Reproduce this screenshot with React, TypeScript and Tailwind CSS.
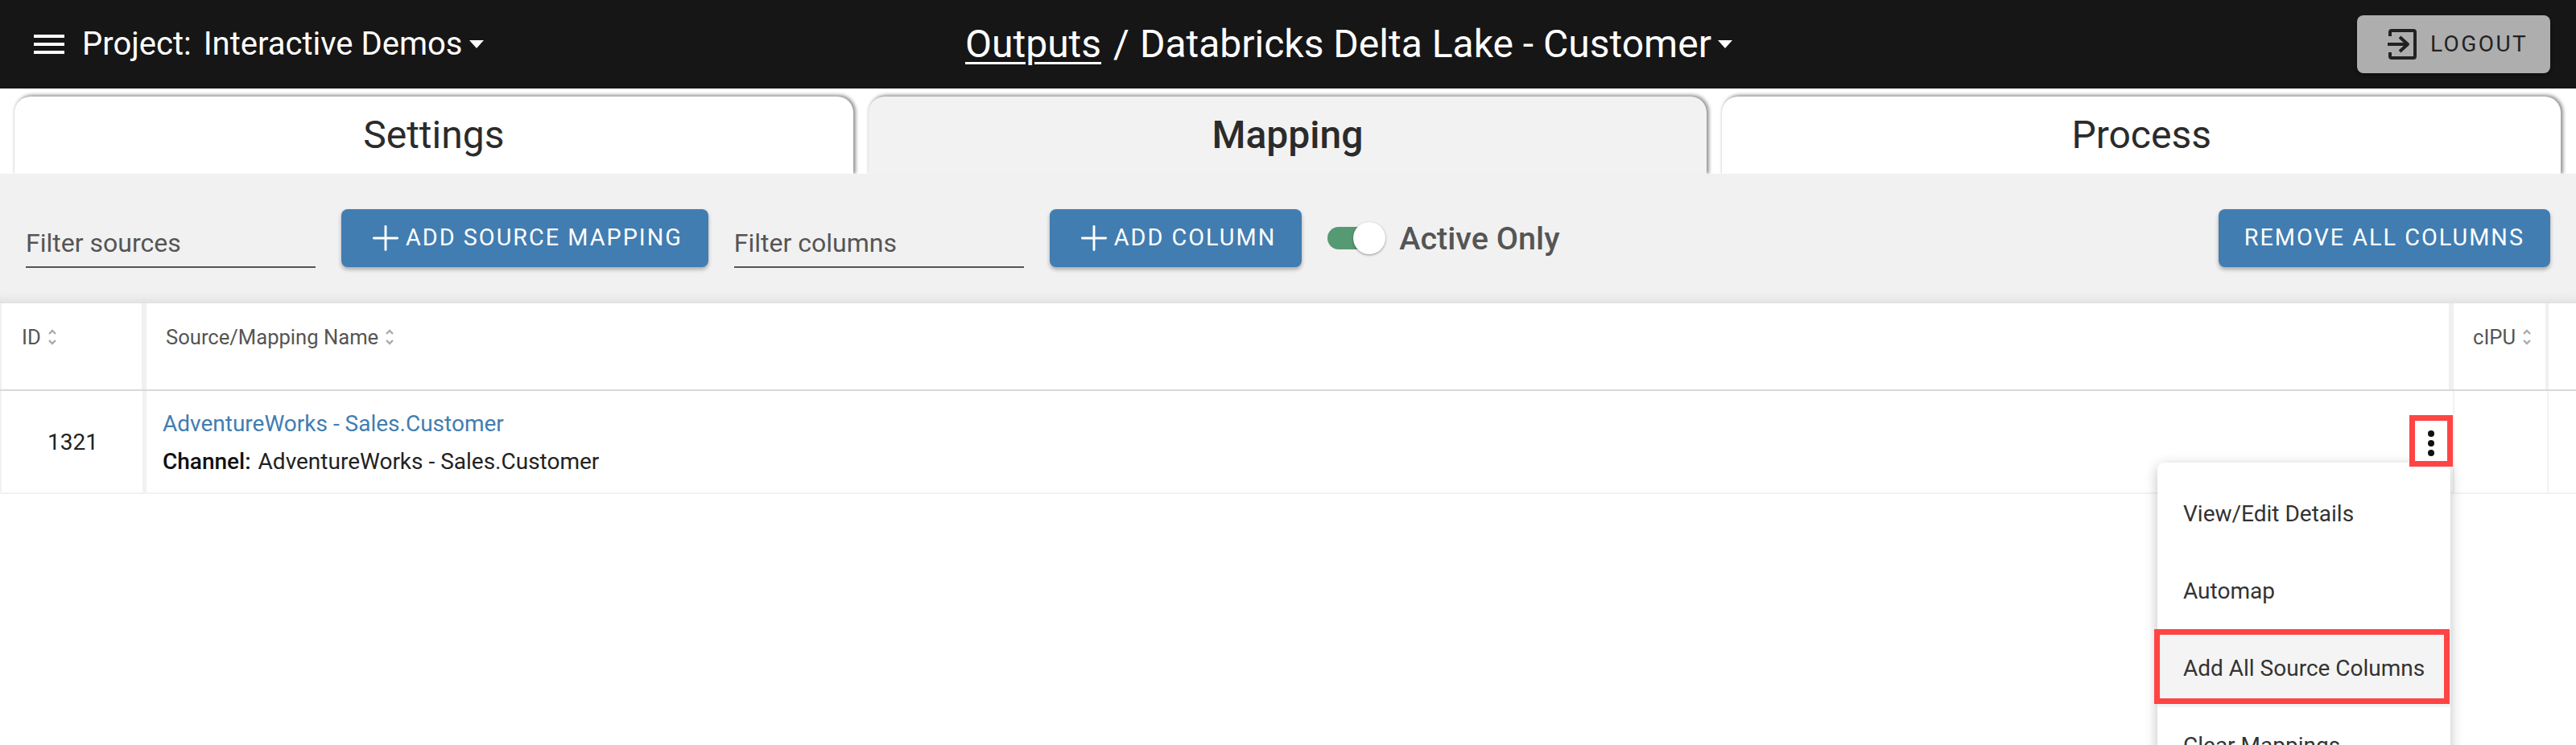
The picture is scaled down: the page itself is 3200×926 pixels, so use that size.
import { Plus } from 'lucide-react';

function SortIcon() {
  return (
    <svg viewBox="0 0 10 20" className="ml-[9px] mt-[9px] h-[20px] w-[10px] text-[#aaaaaa]" fill="none" stroke="currentColor" strokeWidth="2.4">
      <path d="M1 6l4-4 4 4" />
      <path d="M1 14l4 4 4-4" />
    </svg>
  );
}

function Caret() {
  return <span className="ml-[8px] h-0 w-0 border-x-[9px] border-t-[10px] border-x-transparent border-t-white" />;
}

function LogoutIcon() {
  return (
    <svg viewBox="0 0 36 38" className="h-[38px] w-[36px]" fill="none" stroke="currentColor" strokeWidth="4" strokeLinejoin="round">
      <path d="M3 9V4a2 2 0 0 1 2-2h27a2 2 0 0 1 2 2v30a2 2 0 0 1-2 2H5a2 2 0 0 1-2-2v-5" />
      <path d="M0 19h25" />
      <path d="M15 10l10 9-10 9" />
    </svg>
  );
}

function ActionButton({ label, icon }: { label: string; icon?: boolean }) {
  return (
    <button className="flex h-[72px] items-center justify-center rounded-[8px] bg-[#417db1] px-[32px] text-[28.8px] font-[450] tracking-[2px] text-white shadow-[0_3px_5px_rgba(0,0,0,0.3)]">
      {icon && <Plus className="-ml-[2px] h-[50px] w-[50px]" strokeWidth={1.4} />}
      {label}
    </button>
  );
}

function FilterInput({ placeholder }: { placeholder: string }) {
  return (
    <div className="flex h-[73px] w-[360px] items-center border-b-[2px] border-[#555] pt-[12px] text-[32px] text-[#555]">
      {placeholder}
    </div>
  );
}

function Tab({ label, active }: { label: string; active?: boolean }) {
  return (
    <div
      className={`flex h-[96px] flex-1 items-center justify-center rounded-t-[20px] text-[48px] text-[#2b2b2b] shadow-[2px_-1px_4px_1px_rgba(0,0,0,0.42)] ${
        active ? 'bg-[#f2f2f2] font-medium' : 'bg-white font-[375]'
      }`}
    >
      {label}
    </div>
  );
}

const menuItems = ['View/Edit Details', 'Automap', 'Add All Source Columns', 'Clear Mappings'];

export default function App() {
  return (
    <div className="h-[926px] w-[3200px] overflow-hidden bg-white font-['Roboto',sans-serif]">
      <header className="flex h-[110px] items-center bg-[#161616] pl-[42px] pr-[32px] text-white">
        <div className="flex w-[1076px] items-center text-[40px]">
          <svg viewBox="0 0 38 24" className="mr-[22px] h-[24px] w-[38px]" fill="currentColor">
            <rect width="38" height="4" />
            <rect y="10" width="38" height="4" />
            <rect y="20" width="38" height="4" />
          </svg>
          <span>Project:</span>
          <span className="ml-[15px]">Interactive Demos</span>
          <Caret />
        </div>
        <div className="flex flex-1 items-center text-[48px]">
          <span className="ml-[81px] underline decoration-[3px] underline-offset-[6px]">Outputs</span>
          <span className="ml-[15px] mr-[13px]">/</span>
          <span>Databricks Delta Lake - Customer</span>
          <Caret />
        </div>
        <button className="flex h-[72px] w-[240px] items-center rounded-[8px] bg-[#aeaeae] pl-[38px] text-[28px] tracking-[2.4px] text-[#222] shadow-[0_2px_4px_rgba(0,0,0,0.4)]">
          <LogoutIcon />
          <span className="ml-[17px]">LOGOUT</span>
        </button>
      </header>

      <nav className="flex gap-[19px] bg-white pl-[18px] pr-[19px] pt-[10px]">
        <Tab label="Settings" />
        <Tab label="Mapping" active />
        <Tab label="Process" />
      </nav>

      <section className="relative flex h-[161px] items-start gap-[32px] bg-[#f1f1f1] px-[32px] pt-[44px] shadow-[inset_0_-14px_14px_-12px_rgba(0,0,0,0.1)]">
        <FilterInput placeholder="Filter sources" />
        <ActionButton label="ADD SOURCE MAPPING" icon />
        <FilterInput placeholder="Filter columns" />
        <ActionButton label="ADD COLUMN" icon />
        <div className="flex h-[72px] items-center">
          <div className="relative h-[28px] w-[60px] rounded-full bg-[#559a72]">
            <span className="absolute -top-[6px] left-[32px] h-[40px] w-[40px] rounded-full bg-white shadow-[0_1px_3px_rgba(0,0,0,0.4)]" />
          </div>
          <span className="ml-[29px] pt-[2px] text-[39.6px] font-medium text-[#555]">Active Only</span>
        </div>
        <div className="ml-auto">
          <ActionButton label="REMOVE ALL COLUMNS" />
        </div>
      </section>

      <div className="relative">
        <div className="flex h-[109px] border-b-[2px] border-[#d8d8d8] text-[25.6px] text-[#555]">
          <div className="flex w-[182px] items-start border-l-[2px] border-r-[6px] border-[#f0f0f0] pl-[25px] pt-[23px]">
            ID
            <SortIcon />
          </div>
          <div className="flex flex-1 items-start pl-[24px] pt-[23px]">
            Source/Mapping Name
            <SortIcon />
          </div>
          <div className="flex w-[124px] items-start border-l-[6px] border-r-[4px] border-[#f0f0f0] pl-[24px] pt-[23px]">
            cIPU
            <SortIcon />
          </div>
          <div className="w-[34px]" />
        </div>
        <div className="flex h-[128px] border-b-[2px] border-[#f2f2f2] text-[28px] text-[#222]">
          <div className="flex w-[182px] items-center justify-center border-l-[2px] border-r-[5px] border-[#f2f2f2] pl-[2px] pt-[2px]">1321</div>
          <div className="flex flex-1 items-center justify-between pl-[20px]">
            <div className="flex flex-col gap-[15px] pt-[2px] leading-[32px]">
              <span className="text-[#417db1]">AdventureWorks - Sales.Customer</span>
              <span>
                <b className="mr-[2px] font-medium text-[#111]">Channel:</b> AdventureWorks - Sales.Customer
              </span>
            </div>
            <button className="relative z-10 mb-[2px] flex h-[64px] w-[54px] flex-col items-center justify-center gap-[4px] border-[7px] border-[#ff4444] bg-white pt-[6px]">
              <span className="h-[8px] w-[8px] rounded-full bg-[#111]" />
              <span className="h-[8px] w-[8px] rounded-full bg-[#111]" />
              <span className="h-[8px] w-[8px] rounded-full bg-[#111]" />
            </button>
          </div>
          <div className="w-[119px] border-x-[2px] border-[#f2f2f2]" />
          <div className="w-[34px]" />
        </div>

        {/* open row menu */}
        <div className="absolute left-[2680px] top-[198px] w-[364px] rounded-[8px] bg-white py-[16px] text-[28px] text-[#333] shadow-[0_4px_16px_rgba(0,0,0,0.25)]">
          {menuItems.map((item) => (
            <div
              key={item}
              className={`relative flex h-[96px] items-center pl-[32px] ${
                item === 'Add All Source Columns' ? 'bg-[#f4f4f4]' : ''
              }`}
            >
              {item}
              {item === 'Add All Source Columns' && (
                <span className="absolute -left-[4px] -top-[1px] right-[1px] h-[93px] border-[7px] border-[#ff4444]" />
              )}
            </div>
          ))}
        </div>
      </div>
    </div>
  );
}
